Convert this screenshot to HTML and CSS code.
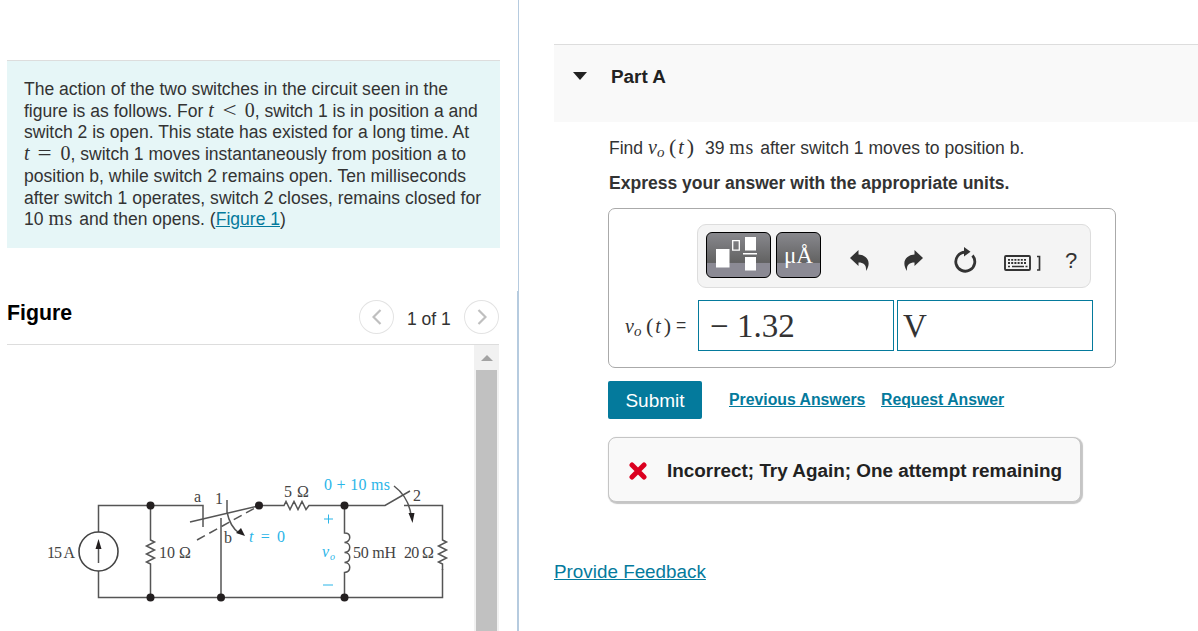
FILE: index.html
```html
<!DOCTYPE html>
<html lang="en">
<head>
    <meta charset="UTF-8">
    <meta name="viewport" content="width=device-width, initial-scale=1.0">
    <title>Circuit Switches - Part A</title>
    <link rel="stylesheet" href="styles.css">
</head>
<body>
    <div class="page">
        <div class="left">
            <div class="intro-pane">
                <div class="intro">
                    The action of the two switches in the circuit seen in the<br>
                    figure is as follows. For <span class="math cond"><i>t</i><span class="op">&lt;</span><span>0</span></span>, switch 1 is in position a and<br>
                    switch 2 is open. This state has existed for a long time. At<br>
                    <span class="math cond"><i>t</i><span class="op">=</span><span>0</span></span>, switch 1 moves instantaneously from position a to<br>
                    position b, while switch 2 remains open. Ten milliseconds<br>
                    after switch 1 operates, switch 2 closes, remains closed for<br>
                    10 <span class="math unit">ms</span> and then opens. (<a href="#figure">Figure 1</a>)
                </div>
            </div>
            <div class="figure-pane" id="figure">
                <div class="figure-header">
                    <h2>Figure</h2>
                    <div class="pager">
                        <button class="round"><svg width="10" height="16" viewBox="0 0 10 16"><path d="M8.500 1 1.500 8l7 7"/></svg></button>
                        <span>1 of 1</span>
                        <button class="round"><svg width="10" height="16" viewBox="0 0 10 16"><path d="M1.500 1 8.500 8l-7 7"/></svg></button>
                    </div>
                </div>
                <div class="figure-body">
                    <svg class="circuit" width="467" height="286" viewBox="7 345 467 286">
                        <!-- wires -->
                        <g class="wire">
                            <path d="M98.500 532V505.500H203V527M98.500 571V597.500H442.500V569"/>
                            <path d="M150.500 505V540l4 2-8 4 8 4-8 4 8 4-8 4 4 2V598"/>
                            <path d="M221 518V597M190 522 258 506"/>
                            <path d="M197 540 255 508" stroke-dasharray="9 5"/>
                            <path d="M259 505.500H284l2-4 4 8 4-8 4 8 4-8 4 8 3-4H385L410 491M404 505.500H442.500V540l4 2-8 4 8 4-8 4 8 4-8 4 4 2v6"/>
                            <path d="M344.500 505V533c7 0 7 8 0 9.500c7 0 7 9 0 10c7 0 7 9 0 10c7 0 7 9 0 10V598"/>
                            <path d="M227 500V512c2 10 5 16 12 21M394 486c8 6 15 14 17 29"/>
                        </g>
                        <circle class="source" cx="98.500" cy="551.500" r="19.500"/>
                        <path class="wire" d="M98.500 563V545"/>
                        <g class="solid">
                            <path d="M98.500 539l3 10h-6zM245 536l-9-3 5-5zM412.500 523l-4-10h6z"/>
                            <circle cx="150.500" cy="505.500" r="4"/>
                            <circle cx="150.500" cy="597.500" r="4"/>
                            <circle cx="221" cy="597.500" r="4"/>
                            <circle cx="259" cy="505.500" r="4"/>
                            <circle cx="344.500" cy="505.500" r="4"/>
                            <circle cx="344.500" cy="597.500" r="4"/>
                        </g>
                        <!-- labels -->
                        <g class="label">
                            <text x="47" y="558" textLength="28">15 A</text>
                            <text x="159" y="558" textLength="32">10 Ω</text>
                            <text x="194" y="502">a</text>
                            <text x="215" y="504">1</text>
                            <text x="224" y="543">b</text>
                            <text x="284" y="497" textLength="25">5 Ω</text>
                            <text x="353" y="558" textLength="43">50 mH</text>
                            <text x="404" y="558" textLength="30">20 Ω</text>
                            <text x="413" y="501">2</text>
                        </g>
                        <g class="label blue">
                            <text x="324" y="490" textLength="66">0 + 10 ms</text>
                            <text x="249" y="542" textLength="36"><tspan font-style="italic">t</tspan> = 0</text>
                            <text x="322" y="557" font-style="italic">v</text>
                            <text x="330" y="560" font-style="italic" font-size="10">o</text>
                            <path d="M324 519h9M328.500 514.500v9M323 585h10"/>
                        </g>
                    </svg>
                    <div class="scrollbar">
                        <div class="arrow-up"></div>
                        <div class="thumb"></div>
                    </div>
                </div>
            </div>
        </div>

        <div class="right">
            <div class="part-header">
                <span class="caret"></span>
                <h3>Part A</h3>
            </div>
            <div class="part-body">
                <p class="question">Find <span class="math vo"><i>v</i><sub>o</sub><span class="paren">(</span><i class="t">t</i><span class="paren">)</span></span>39 <span class="math unit">ms</span> after switch 1 moves to position b.</p>
                <p class="hint">Express your answer with the appropriate units.</p>
                <div class="answer-box">
                    <div class="toolbar">
                        <button class="tool templates">
                            <svg width="63" height="44" viewBox="0 0 63 44">
                                <path fill="#fff" d="M9 16h13.500v18.500H9zM38 4h11v13.500H38zM38 24h11v13.500H38zM36 20h14v1.500H36z"/>
                                <path fill="none" stroke="#fff" stroke-width="1.300" d="M25.700 7.700h6.600v9.500h-6.600z"/>
                            </svg>
                        </button>
                        <button class="tool units">μÅ</button>
                        <svg class="icon undo" width="20" height="22" viewBox="0 0 20 22"><path d="M0 8 8.500 0v4.500C17 5 22 12 16 21c.5-6-2-8.500-7.500-8.500V16z"/></svg>
                        <svg class="icon redo" width="20" height="22" viewBox="0 0 20 22"><path d="M20 8 11.500 0v4.500C3 5-2 12 4 21c-.5-6 2-8.500 7.500-8.500V16z"/></svg>
                        <svg class="icon reset" width="24" height="26" viewBox="0 0 24 26"><path fill="none" stroke="#333" stroke-width="2.800" d="M12 5.200a9.500 9.500 0 1 0 7.500 3.300"/><path d="M11 0 17.500 4.700 11 9.500z"/></svg>
                        <svg class="icon keyboard" width="38" height="18" viewBox="0 0 38 18">
                            <rect x="1" y="2" width="25" height="14" rx="1" fill="none" stroke="#333" stroke-width="1.900"/>
                            <path fill="none" stroke="#333" stroke-width="1.800" stroke-dasharray="2 1.200" d="M4 5.800h19M4 9h19"/>
                            <path fill="none" stroke="#333" stroke-width="1.700" d="M4 12.500h2M8 12.500h12M21.500 12.500h2M33 2.500h2.500v13.500h-2.500"/>
                        </svg>
                        <span class="help">?</span>
                    </div>
                    <div class="answer-row">
                        <span class="math vo"><i>v</i><sub>o</sub><span class="paren">(</span><i class="t">t</i><span class="paren">)</span></span>
                        <span class="equals">=</span>
                        <div class="field value"><span class="minus">−</span>1.32</div>
                        <div class="field">V</div>
                    </div>
                </div>
                <div class="actions">
                    <button class="submit">Submit</button>
                    <a class="previous" href="#">Previous Answers</a>
                    <a class="request" href="#">Request Answer</a>
                </div>
                <div class="feedback">
                    <svg width="18" height="18" viewBox="0 0 18 18"><path d="M3 3l12 12M15 3 3 15"/></svg>
                    <span>Incorrect; Try Again; One attempt remaining</span>
                </div>
            </div>
            <a class="provide" href="#">Provide Feedback</a>
        </div>
    </div>
</body>
</html>
```
FILE: styles.css
```css
* {
    box-sizing: border-box;
}

body {
    margin: 0;
    height: 631px;
    overflow: hidden;
    background: #fff;
    color: #333;
    font-family: "Liberation Sans", Arial, sans-serif;
    font-size: 17.55px;
}

h2, h3, p {
    margin: 0;
}

button {
    padding: 0;
    font-family: inherit;
}

a {
    color: #047a9c;
}

.page {
    display: flex;
    height: 631px;
}

/* left column */
.left {
    display: flex;
    flex-direction: column;
    width: 519px;
    flex: none;
}

.intro-pane {
    height: 291px;
    padding: 60px 18px 0 7px;
    border-right: 1px solid #b6cbdf;
}

.intro {
    height: 188px;
    padding: 18px 0 0 17px;
    background: #e6f6f7;
    border-top: 1px solid #ddd;
    line-height: 21.7px;
    white-space: nowrap;
}

.math {
    font-family: "Liberation Serif", serif;
    font-size: 20px;
    line-height: 0;
}

.unit {
    display: inline-block;
    width: 26px;
    font-size: 20px;
    letter-spacing: 0.6px;
}

.cond {
    display: inline-flex;
    justify-content: space-between;
    width: 46.500px;
}

.op {
    transform: scaleX(1.25);
}

.figure-pane {
    display: flex;
    flex-direction: column;
    flex: 1;
    padding-left: 7px;
    border-right: 2px solid #b6cbdf;
}

.figure-header {
    display: flex;
    justify-content: space-between;
    width: 492px;
    height: 54px;
    border-bottom: 1px solid #ddd;
}

.figure-header h2 {
    padding-top: 10px;
    font-size: 21.3px;
    line-height: 24px;
    color: #000;
}

.pager {
    display: flex;
    gap: 14px;
    padding-top: 9px;
}

.pager span {
    width: 42px;
    margin: 0 1px 0 -1px;
    line-height: 38px;
    white-space: nowrap;
}

.round {
    display: flex;
    align-items: center;
    justify-content: center;
    width: 35px;
    height: 34px;
    border: 1px solid #e3e3e3;
    border-radius: 50%;
    background: #fff;
}

.round path {
    fill: none;
    stroke: #bfbfbf;
    stroke-width: 2.2;
}

.figure-body {
    display: flex;
    width: 492px;
    flex: 1;
}

.circuit {
    flex: none;
}

.wire {
    fill: none;
    stroke: #555;
    stroke-width: 1.5;
}

.source {
    fill: none;
    stroke: #444;
    stroke-width: 1.6;
}

.solid {
    fill: #231f20;
}

.label {
    fill: #444;
    font-family: "Liberation Serif", serif;
    font-size: 16px;
}

.blue {
    fill: #2bb5e8;
}

.blue path {
    stroke: #2bb5e8;
}

.scrollbar {
    display: flex;
    flex-direction: column;
    align-items: center;
    width: 25px;
    background: #f1f1f1;
}

.arrow-up {
    margin: 10px 0 9px;
    border: 6px solid transparent;
    border-top: 0;
    border-bottom-color: #a3a3a3;
}

.thumb {
    width: 21px;
    flex: 1;
    background: #c1c1c1;
}

/* right column */
.right {
    flex: 1;
    padding: 44px 0 0 35px;
}

.part-header {
    display: flex;
    height: 78px;
    padding: 20px 0 0 19px;
    background: #f9f9f9;
    border-top: 1px solid #ddd;
}

.part-header h3 {
    font-size: 18.9px;
    line-height: 23px;
    color: #222;
}

.caret {
    height: 0;
    margin: 7px 24px 0 0;
    border: 7px solid transparent;
    border-bottom: 0;
    border-top: 8px solid #222;
}

.part-body {
    padding-left: 54px;
}

.question {
    height: 39px;
    padding: 15px 0 0 1px;
    line-height: 22px;
    white-space: nowrap;
}

.hint {
    height: 47px;
    padding: 11px 0 0 1px;
    font-weight: bold;
    line-height: 22px;
}

.vo {
    display: inline-flex;
    align-items: baseline;
    width: 57px;
    font-size: 20px;
}

.vo sub {
    width: 12px;
    font-size: 15px;
    font-style: italic;
    vertical-align: baseline;
    transform: translateY(3px);
}

.vo .paren {
    font-size: 22px;
}

.vo .t {
    margin: 0 3px 0 2px;
}

.answer-box {
    width: 508px;
    height: 160px;
    padding: 15px 0 0 15px;
    border: 1px solid #aaa;
    border-radius: 7px;
}

.toolbar {
    display: flex;
    align-items: flex-start;
    width: 394px;
    height: 64px;
    margin-left: 73px;
    padding: 7px 0 0 8px;
    border: 1px solid #ddd;
    border-radius: 9px;
    background: #f4f4f4;
}

.tool {
    width: 65px;
    height: 46px;
    margin-right: 5px;
    border: 1px solid #000;
    border-radius: 6px;
    background: linear-gradient(#88888d 0%, #626262 67%, #8b8a94 68%, #8b8a94 100%);
    color: #fff;
}

.tool svg {
    display: block;
}

.units {
    width: 45px;
    margin-right: 29px;
    padding-top: 2px;
    font-family: "Liberation Serif", serif;
    font-size: 23px;
}

.icon {
    flex: none;
    fill: #333;
}

.undo {
    margin: 18px 33px 0 0;
}

.redo {
    margin: 18px 30px 0 0;
}

.reset {
    margin: 15px 27px 0 0;
}

.keyboard {
    margin: 22px 22px 0 0;
}

.help {
    margin: 15px 0 0 1px;
    font-size: 22px;
    line-height: 28px;
}

.answer-row {
    display: flex;
    height: 51px;
    margin-top: 12px;
}

.answer-row .vo {
    width: 52px;
    padding-left: 1px;
    line-height: 51px;
}

.equals {
    width: 22px;
    line-height: 51px;
}

.field {
    width: 196px;
    height: 51px;
    margin-right: 3px;
    padding-left: 5px;
    border: 1px solid #047a9c;
    font-family: "Liberation Serif", serif;
    font-size: 33px;
    line-height: 50px;
}

.field.value {
    padding-left: 11px;
}

.minus {
    display: inline-block;
    width: 27px;
}

.actions {
    display: flex;
    margin-top: 13px;
    line-height: 37px;
    font-size: 15.8px;
    font-weight: bold;
    white-space: nowrap;
}

.submit {
    width: 94px;
    height: 38px;
    margin-right: 27px;
    padding-top: 1px;
    border: 0;
    border-radius: 2px;
    background: #047a9c;
    color: #fff;
    font-size: 19px;
}

.previous {
    width: 152px;
}

.feedback {
    display: flex;
    align-items: center;
    width: 473px;
    height: 65px;
    margin-top: 18px;
    padding: 3px 0 0 20px;
    border: 1px solid #c5c5c5;
    border-radius: 8px;
    background: #f9f9f9;
    box-shadow: 1px 1px 1px 1px #c5c5c5;
    color: #222;
    font-size: 18.9px;
    font-weight: bold;
    white-space: nowrap;
}

.feedback svg {
    margin-right: 20px;
}

.feedback path {
    stroke: #db0020;
    stroke-width: 5;
    stroke-linecap: round;
}

.provide {
    display: inline-block;
    margin-top: 59px;
    font-size: 18.85px;
    line-height: 22px;
}
```
